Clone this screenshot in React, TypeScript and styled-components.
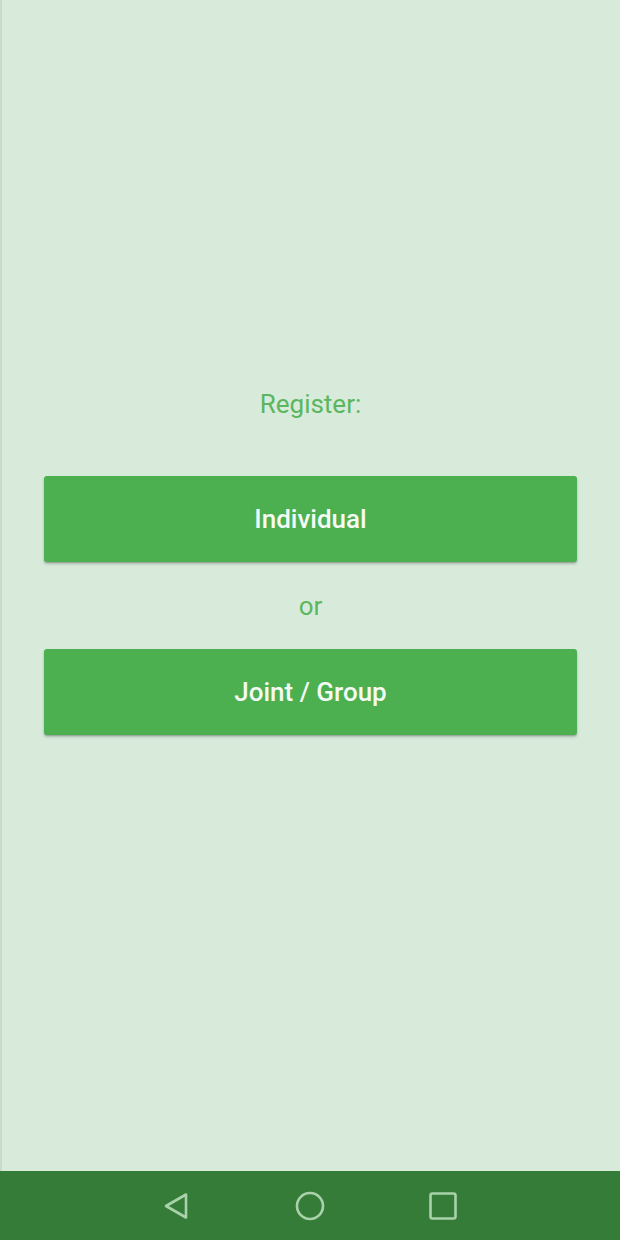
import React from 'react';
import styled, { createGlobalStyle } from 'styled-components';

const GlobalStyle = createGlobalStyle`
  html, body {
    margin: 0;
    padding: 0;
    background: #d8ebdb;
  }
  body {
    font-family: Roboto, "Noto Sans", sans-serif;
  }
`;

const Screen = styled.div`
  display: flex;
  flex-direction: column;
  width: 620px;
  height: 1240px;
  background: #d8ebdb;
  border-left: 2px solid #c8dbcb;
  box-sizing: border-box;
`;

const Content = styled.main`
  flex: 1;
  display: flex;
  flex-direction: column;
  align-items: center;
  padding: 389px 43px 0 42px;
`;

const Caption = styled.div<{ $gap: number }>`
  margin-top: ${(p) => p.$gap}px;
  font-size: 26px;
  line-height: 30px;
  color: #5bb65f;
`;

const Action = styled.button<{ $gap: number }>`
  margin-top: ${(p) => p.$gap}px;
  width: 100%;
  height: 86px;
  border: none;
  border-radius: 3px;
  background: #4caf50;
  color: #f4faf4;
  font-family: Roboto, sans-serif;
  font-size: 26px;
  font-weight: 500;
  box-shadow: 0 2px 3px rgba(0, 0, 0, 0.22), 0 1px 1px rgba(0, 0, 0, 0.12);
  cursor: pointer;
`;

const NavBar = styled.nav`
  height: 69px;
  flex-shrink: 0;
  background: #367c39;
  display: flex;
  align-items: center;
  justify-content: center;
  gap: 103px;
  margin-left: -2px;
`;

const NavIcon = styled.svg`
  width: 30px;
  height: 30px;
  fill: none;
  stroke: #a9d2aa;
  stroke-width: 2.6;
  stroke-linejoin: round;
`;

export default function App() {
  return (
    <>
      <GlobalStyle />
      <Screen>
        <Content>
          <Caption $gap={0}>Register:</Caption>
          <Action $gap={57}>Individual</Action>
          <Caption $gap={29}>or</Caption>
          <Action $gap={28}>Joint / Group</Action>
        </Content>
        <NavBar>
          <NavIcon viewBox="0 0 30 30">
            <path d="M24 3.5 L24 26.5 L4 15 Z" />
          </NavIcon>
          <NavIcon viewBox="0 0 30 30">
            <circle cx="15" cy="15" r="13" />
          </NavIcon>
          <NavIcon viewBox="0 0 30 30">
            <rect x="2.5" y="2.5" width="25" height="25" rx="2" />
          </NavIcon>
        </NavBar>
      </Screen>
    </>
  );
}
